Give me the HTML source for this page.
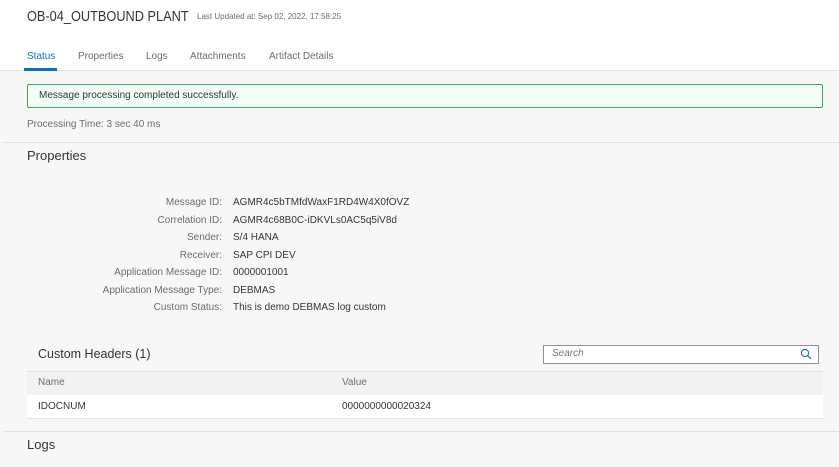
<!DOCTYPE html>
<html><head><meta charset="utf-8"><style>
*{margin:0;padding:0;box-sizing:border-box}
body{width:839px;height:467px;overflow:hidden;background:#f7f7f7;font-family:"Liberation Sans",sans-serif;color:#32363a;position:relative;font-size:11px}
.abs{position:absolute;white-space:nowrap}
#hdr{position:absolute;left:0;top:0;width:839px;height:71px;background:#fff;border-bottom:1px solid #e5e5e5}
.tab{position:absolute;top:51px;font-size:10px;color:#6a6d70}
.lbl{position:absolute;right:617px;color:#6a6d70;white-space:nowrap;font-size:10px}
.val{position:absolute;left:233px;color:#32363a;white-space:nowrap;font-size:10px}
</style></head><body>
<div id="hdr">
<div class="abs" style="left:27px;top:9px;font-size:14.5px;color:#32363a;transform:scaleX(0.88);transform-origin:0 0">OB-04_OUTBOUND PLANT</div>
<div class="abs" style="left:197px;top:12px;font-size:8px;color:#6a6d70">Last Updated at: Sep 02, 2022, 17:58:25</div>
<div class="tab" style="left:27px;color:#0a6ed1">Status</div>
<div style="position:absolute;left:24px;top:68px;width:33px;height:3px;background:#0a6ed1"></div>
<div class="tab" style="left:78px">Properties</div>
<div class="tab" style="left:146px">Logs</div>
<div class="tab" style="left:190px">Attachments</div>
<div class="tab" style="left:269px">Artifact Details</div>
</div>
<div style="position:absolute;left:27px;top:84px;width:796px;height:24px;background:#f1fdf6;border:1px solid #3fa45b;border-radius:2px"></div>
<div class="abs" style="left:39px;top:90px;font-size:10px;color:#32363a">Message processing completed successfully.</div>
<div class="abs" style="left:27px;top:119px;font-size:10px;color:#6a6d70">Processing Time: 3 sec 40 ms</div>
<div style="position:absolute;left:3px;top:142px;width:836px;height:1px;background:#e0e0e0"></div>
<div class="abs" style="left:27px;top:148px;font-size:13px;color:#32363a">Properties</div>
<div class="lbl" style="top:197px">Message ID:</div><div class="val" style="top:197px">AGMR4c5bTMfdWaxF1RD4W4X0fOVZ</div>
<div class="lbl" style="top:215px">Correlation ID:</div><div class="val" style="top:215px">AGMR4c68B0C-iDKVLs0AC5q5iV8d</div>
<div class="lbl" style="top:232px">Sender:</div><div class="val" style="top:232px">S/4 HANA</div>
<div class="lbl" style="top:250px">Receiver:</div><div class="val" style="top:250px">SAP CPI DEV</div>
<div class="lbl" style="top:267px">Application Message ID:</div><div class="val" style="top:267px">0000001001</div>
<div class="lbl" style="top:285px">Application Message Type:</div><div class="val" style="top:285px">DEBMAS</div>
<div class="lbl" style="top:302px">Custom Status:</div><div class="val" style="top:302px">This is demo DEBMAS log custom</div>
<div class="abs" style="left:38px;top:347px;font-size:12.5px;color:#32363a">Custom Headers (1)</div>
<div style="position:absolute;left:543px;top:345px;width:276px;height:19px;background:#fff;border:1px solid #89919a;border-radius:1px"></div>
<div class="abs" style="left:552px;top:348px;font-size:10px;font-style:italic;color:#74777a">Search</div>
<svg style="position:absolute;left:800px;top:348px" width="12" height="12" viewBox="0 0 12 12"><circle cx="5" cy="5" r="3.6" fill="none" stroke="#0a6ed1" stroke-width="1.1"/><path d="M7.6 7.6L10.8 10.8" stroke="#0a6ed1" stroke-width="1.3"/></svg>
<div style="position:absolute;left:27px;top:371px;width:796px;height:24px;background:#f2f2f2;border-top:1px solid #e0e0e0"></div>
<div class="abs" style="left:38px;top:377px;font-size:10px;color:#6a6d70">Name</div>
<div class="abs" style="left:342px;top:377px;font-size:10px;color:#6a6d70">Value</div>
<div style="position:absolute;left:27px;top:395px;width:796px;height:24px;background:#fff;border-bottom:1px solid #e5e5e5"></div>
<div class="abs" style="left:38px;top:401px;font-size:10px">IDOCNUM</div>
<div class="abs" style="left:342px;top:401px;font-size:10px">0000000000020324</div>
<div style="position:absolute;left:3px;top:431px;width:836px;height:1px;background:#e0e0e0"></div>
<div class="abs" style="left:27px;top:437px;font-size:13px;color:#32363a">Logs</div>
</body></html>
